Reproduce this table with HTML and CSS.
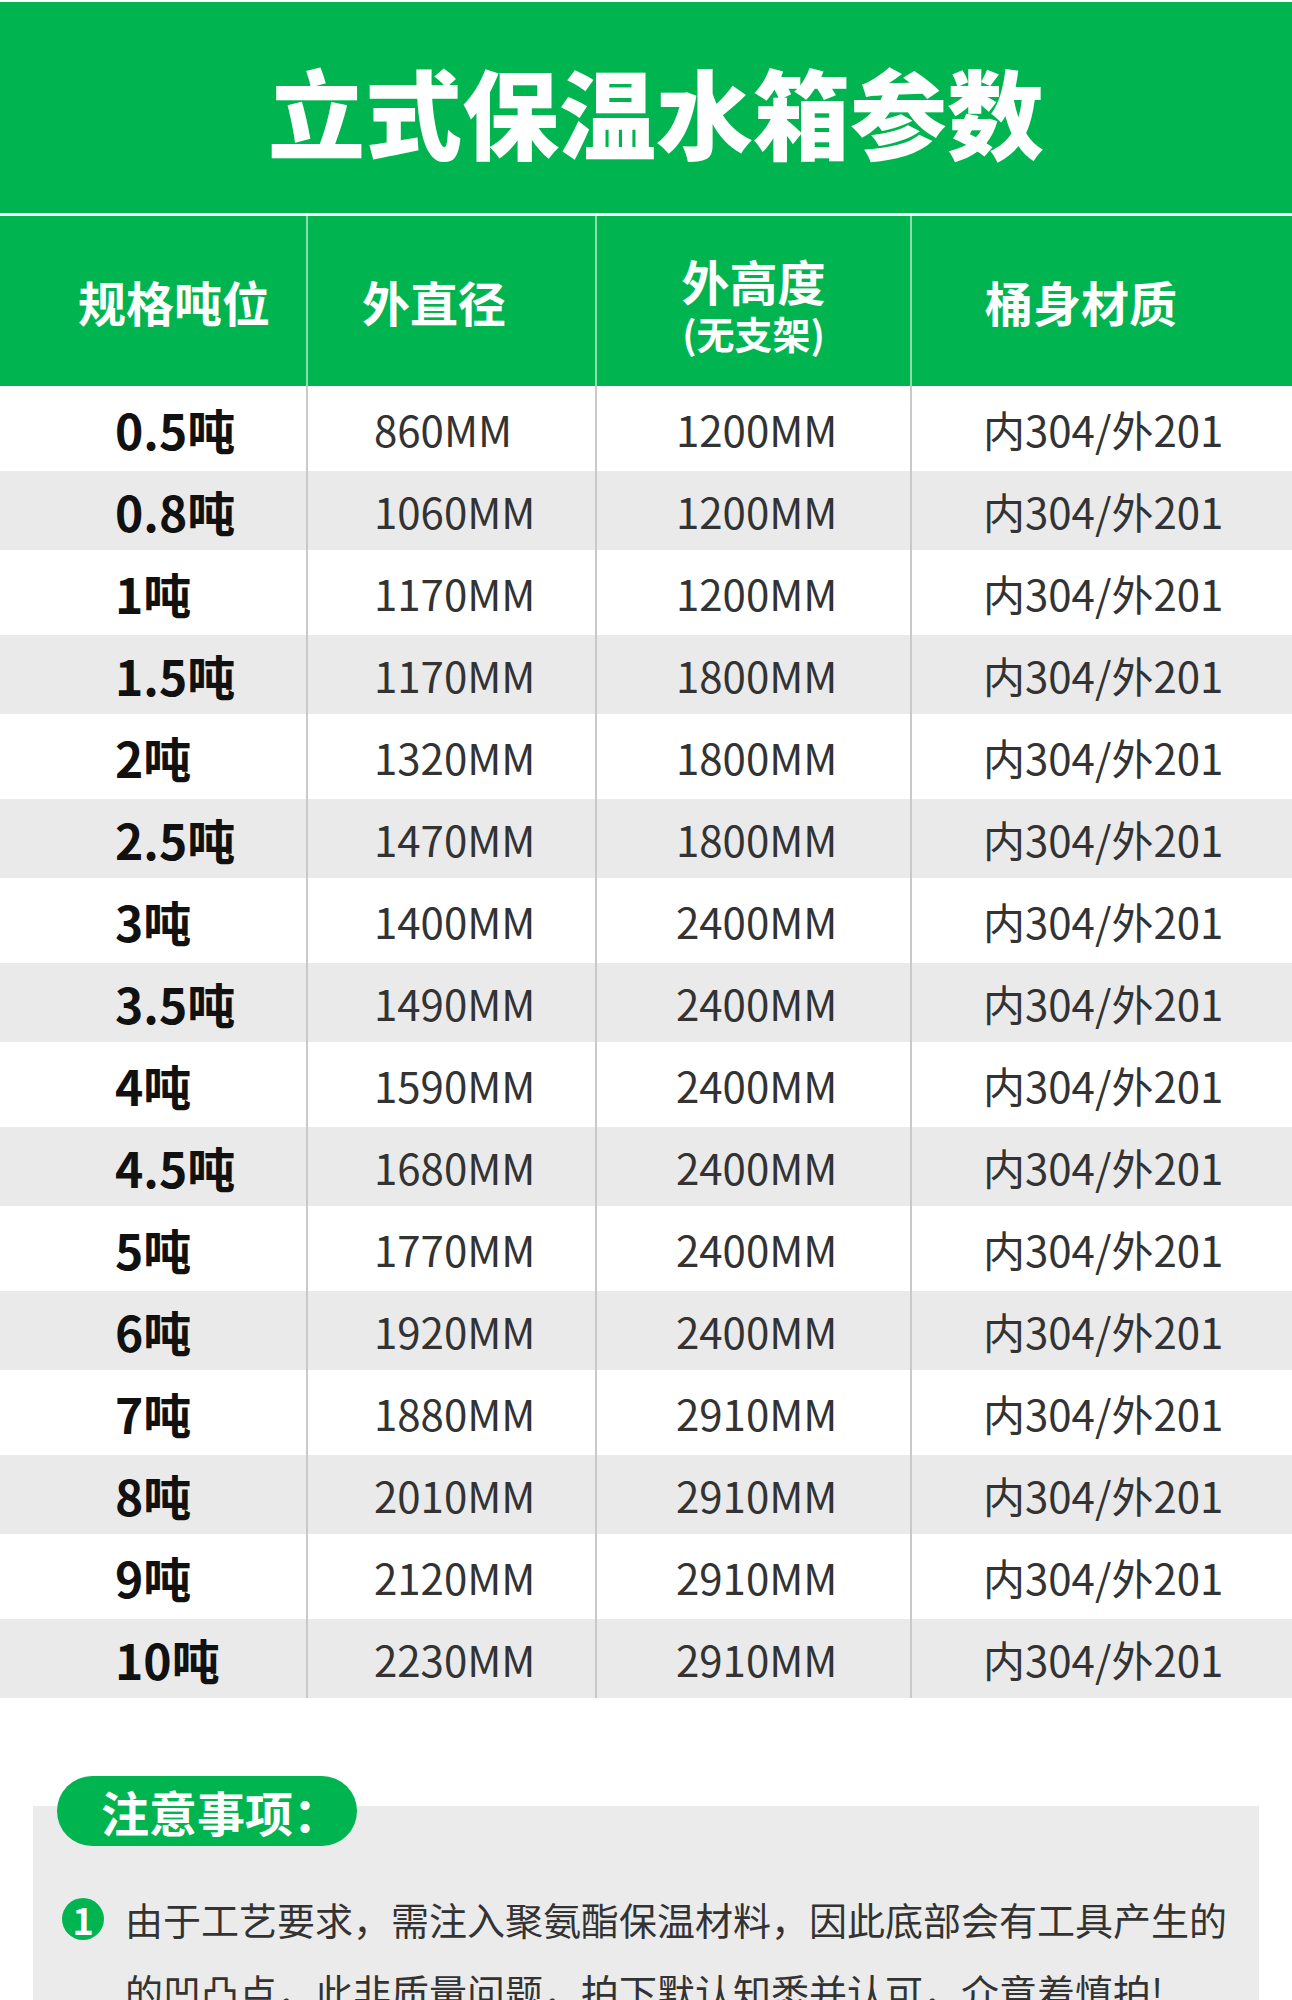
FILE: index.html
```html
<!DOCTYPE html>
<html lang="zh-CN">
<head>
<meta charset="utf-8">
<title>立式保温水箱参数</title>
<link rel="stylesheet" href="styles.css">
</head>
<body>
<div class="page">
  <header class="banner">
    <h1 class="title">立式保温水箱参数</h1>
  </header>

  <div class="spec">
    <div class="row head">
      <div class="cell c1">规格吨位</div>
      <div class="cell c2">外直径</div>
      <div class="cell c3 two"><span class="l1">外高度</span><span class="l2">(无支架)</span></div>
      <div class="cell c4">桶身材质</div>
    </div>

    <div class="row odd"><div class="cell c1">0.5吨</div><div class="cell c2">860MM</div><div class="cell c3">1200MM</div><div class="cell c4">内304/外201</div></div>
    <div class="row even"><div class="cell c1">0.8吨</div><div class="cell c2">1060MM</div><div class="cell c3">1200MM</div><div class="cell c4">内304/外201</div></div>
    <div class="row odd"><div class="cell c1">1吨</div><div class="cell c2">1170MM</div><div class="cell c3">1200MM</div><div class="cell c4">内304/外201</div></div>
    <div class="row even"><div class="cell c1">1.5吨</div><div class="cell c2">1170MM</div><div class="cell c3">1800MM</div><div class="cell c4">内304/外201</div></div>
    <div class="row odd"><div class="cell c1">2吨</div><div class="cell c2">1320MM</div><div class="cell c3">1800MM</div><div class="cell c4">内304/外201</div></div>
    <div class="row even"><div class="cell c1">2.5吨</div><div class="cell c2">1470MM</div><div class="cell c3">1800MM</div><div class="cell c4">内304/外201</div></div>
    <div class="row odd"><div class="cell c1">3吨</div><div class="cell c2">1400MM</div><div class="cell c3">2400MM</div><div class="cell c4">内304/外201</div></div>
    <div class="row even"><div class="cell c1">3.5吨</div><div class="cell c2">1490MM</div><div class="cell c3">2400MM</div><div class="cell c4">内304/外201</div></div>
    <div class="row odd"><div class="cell c1">4吨</div><div class="cell c2">1590MM</div><div class="cell c3">2400MM</div><div class="cell c4">内304/外201</div></div>
    <div class="row even"><div class="cell c1">4.5吨</div><div class="cell c2">1680MM</div><div class="cell c3">2400MM</div><div class="cell c4">内304/外201</div></div>
    <div class="row odd"><div class="cell c1">5吨</div><div class="cell c2">1770MM</div><div class="cell c3">2400MM</div><div class="cell c4">内304/外201</div></div>
    <div class="row even"><div class="cell c1">6吨</div><div class="cell c2">1920MM</div><div class="cell c3">2400MM</div><div class="cell c4">内304/外201</div></div>
    <div class="row odd"><div class="cell c1">7吨</div><div class="cell c2">1880MM</div><div class="cell c3">2910MM</div><div class="cell c4">内304/外201</div></div>
    <div class="row even"><div class="cell c1">8吨</div><div class="cell c2">2010MM</div><div class="cell c3">2910MM</div><div class="cell c4">内304/外201</div></div>
    <div class="row odd"><div class="cell c1">9吨</div><div class="cell c2">2120MM</div><div class="cell c3">2910MM</div><div class="cell c4">内304/外201</div></div>
    <div class="row even"><div class="cell c1">10吨</div><div class="cell c2">2230MM</div><div class="cell c3">2910MM</div><div class="cell c4">内304/外201</div></div>
  </div>

  <section class="notes">
    <div class="pill">注意事项：</div>
    <div class="item">
      <span class="num">1</span>
      <p class="text">由于工艺要求，需注入聚氨酯保温材料，因此底部会有工具产生的的凹凸点，此非质量问题，拍下默认知悉并认可，介意着慎拍!</p>
    </div>
  </section>
</div>
</body>
</html>
```

FILE: styles.css
```css
* { box-sizing: border-box; }

html, body {
  margin: 0;
  padding: 0;
  background: #ffffff;
}

body {
  font-family: "Noto Sans CJK SC", "Noto Sans", sans-serif;
  color: #333333;
}

.page {
  width: 1292px;
  padding-top: 2px;
}

.banner {
  height: 211px;
  background: #00b550;
  display: flex;
  align-items: center;
  justify-content: center;
  padding-left: 20px;
}

.title {
  margin: 0;
  color: #ffffff;
  font-size: 97px;
  font-weight: 900;
  line-height: 1;
  letter-spacing: 0;
  padding-top: 4px;
}

.spec {
  margin-top: 3px;
}

.row {
  display: grid;
  grid-template-columns: 306px 289px 315px 382px;
}

.row.head {
  height: 170px;
  background: #00b550;
  color: #ffffff;
  font-weight: 700;
  font-size: 48px;
}

.row.odd { height: 85px; background: #ffffff; }
.row.even { height: 79px; background: #eaeaea; }

.cell {
  display: flex;
  align-items: center;
  white-space: nowrap;
}

.cell + .cell {
  border-left: 2px solid #c9c9c9;
}

.head .cell + .cell {
  border-left: 2px solid #8fdcad;
}

.head .c1 { padding-left: 78px; }
.head .c2 { padding-left: 54px; }
.head .c3 { justify-content: center; }
.head .c4 { padding-left: 73px; }

.head .two {
  flex-direction: column;
  justify-content: center;
  line-height: 1;
  padding-top: 8px;
}

.head .two .l1 {
  font-size: 48px;
  line-height: 56px;
}

.head .two .l2 {
  font-size: 38px;
  line-height: 50px;
}

.row.odd .cell, .row.even .cell {
  font-size: 42px;
  font-weight: 400;
  color: #333333;
}

.row.odd .c1, .row.even .c1 {
  padding-left: 115px;
  font-size: 48px;
  font-weight: 700;
  color: #111111;
}

.row.odd .c2, .row.even .c2 { padding-left: 66px; }
.row.odd .c3, .row.even .c3 { padding-left: 79px; }
.row.odd .c4, .row.even .c4 { padding-left: 71px; }

.notes {
  display: flow-root;
  margin: 108px 33px 0 33px;
  background: #ebebeb;
  padding: 0 20px 30px 29px;
  min-height: 300px;
}

.pill {
  width: 300px;
  height: 70px;
  margin: -30px 0 0 -5px;
  padding-left: 44px;
  border-radius: 35px;
  background: #00b550;
  color: #ffffff;
  font-size: 48px;
  font-weight: 700;
  line-height: 70px;
  white-space: nowrap;
}

.item {
  display: flex;
  align-items: flex-start;
  gap: 21px;
  margin-top: 37px;
}

.num {
  flex: none;
  width: 42px;
  height: 42px;
  margin-top: 15px;
  border-radius: 50%;
  background: #00b550;
  color: #ffffff;
  font-size: 36px;
  font-weight: 700;
  line-height: 42px;
  text-align: center;
}

.text {
  margin: 0;
  font-size: 38px;
  line-height: 72px;
  color: #333333;
}
```
